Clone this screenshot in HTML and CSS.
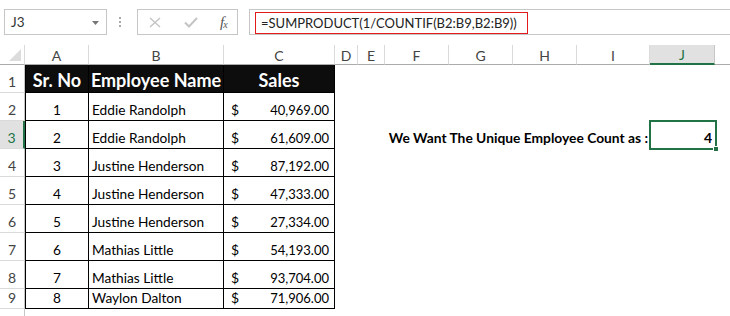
FILE: index.html
```html
<!DOCTYPE html>
<html>
<head>
<meta charset="utf-8">
<link rel="stylesheet" href="styles.css">
</head>
<body>
<div class="toolbar">
  <div class="namebox"><span class="ref">J3</span><svg class="caret" width="7" height="4" viewBox="0 0 7 4"><polygon points="0,0 7,0 3.5,4" fill="#777"/></svg></div>
  <div class="grip"><i></i><i></i><i></i></div>
  <div class="fbtns">
    <svg class="ico-x" width="12" height="11" viewBox="0 0 12 11"><path d="M1 1 L11 10 M11 1 L1 10" stroke="#c4c4c4" stroke-width="1.4" fill="none"/></svg>
    <svg class="ico-ok" width="14" height="11" viewBox="0 0 14 11"><path d="M1 5.5 L5 9.5 L13 1" stroke="#c4c4c4" stroke-width="2" fill="none"/></svg>
    <span class="fx">f<sub>x</sub></span>
  </div>
  <div class="fbar"><div class="formula">=SUMPRODUCT(1/COUNTIF(B2:B9,B2:B9))</div></div>
</div>
<div class="sheet">
  <div class="row colhead">
    <div class="ch corner"><svg width="24" height="19" viewBox="0 0 24 19"><polygon points="21,4 21,16 9,16" fill="#dcdcdc"/></svg></div>
    <div class="ch">A</div><div class="ch">B</div><div class="ch">C</div><div class="ch">D</div><div class="ch">E</div>
    <div class="ch">F</div><div class="ch">G</div><div class="ch">H</div><div class="ch">I</div><div class="ch active">J</div><div class="ch last"></div>
  </div>
  <div class="row">
    <div class="rh">1</div>
    <div class="c th a">Sr. No</div><div class="c th">Employee Name</div><div class="c th">Sales</div>
  </div>
  <div class="row">
    <div class="rh">2</div>
    <div class="c a num">1</div><div class="c name">Eddie Randolph</div><div class="c amt"><span>$</span><span>40,969.00</span></div>
  </div>
  <div class="row">
    <div class="rh active">3</div>
    <div class="c a num">2</div><div class="c name">Eddie Randolph</div><div class="c amt"><span>$</span><span>61,609.00</span></div>
    <div class="label">We Want The Unique Employee Count as :</div>
    <div class="result">4<div class="selection"><div class="handle"></div></div></div>
  </div>
  <div class="row">
    <div class="rh">4</div>
    <div class="c a num">3</div><div class="c name">Justine Henderson</div><div class="c amt"><span>$</span><span>87,192.00</span></div>
  </div>
  <div class="row">
    <div class="rh">5</div>
    <div class="c a num">4</div><div class="c name">Justine Henderson</div><div class="c amt"><span>$</span><span>47,333.00</span></div>
  </div>
  <div class="row">
    <div class="rh">6</div>
    <div class="c a num">5</div><div class="c name">Justine Henderson</div><div class="c amt"><span>$</span><span>27,334.00</span></div>
  </div>
  <div class="row">
    <div class="rh">7</div>
    <div class="c a num">6</div><div class="c name">Mathias Little</div><div class="c amt"><span>$</span><span>54,193.00</span></div>
  </div>
  <div class="row">
    <div class="rh">8</div>
    <div class="c a num">7</div><div class="c name">Mathias Little</div><div class="c amt"><span>$</span><span>93,704.00</span></div>
  </div>
  <div class="row short">
    <div class="rh">9</div>
    <div class="c a num">8</div><div class="c name">Waylon Dalton</div><div class="c amt"><span>$</span><span>71,906.00</span></div>
  </div>
  <div class="row tail">
    <div class="rh"></div>
  </div>
</div>
</body>
</html>
```
FILE: styles.css
```css
* { box-sizing: border-box; }
html, body { margin: 0; padding: 0; }
body {
  width: 730px;
  height: 316px;
  overflow: hidden;
  background: #fff;
  font-family: Lato, "Liberation Sans", sans-serif;
  color: #000;
}

/* ---------- toolbar ---------- */
.toolbar {
  height: 45px;
  display: flex;
  align-items: flex-start;
  padding-top: 9px;
}
.namebox {
  margin-left: 4px;
  width: 103px;
  height: 26px;
  border: 1px solid #c6c6c6;
  display: flex;
  align-items: center;
  justify-content: space-between;
  padding: 0 7px 0 6px;
}
.ref { font-size: 13.5px; color: #333; }
.caret { margin-top: 1px; }
.grip {
  margin-left: 12px;
  width: 2px;
  height: 26px;
  display: flex;
  flex-direction: column;
  justify-content: center;
  gap: 2px;
}
.grip i { display: block; width: 2px; height: 2px; background: #a8a8a8; }
.fbtns {
  margin-left: 16px;
  width: 101px;
  height: 26px;
  border: 1px solid #c6c6c6;
  display: flex;
  align-items: center;
  padding-left: 11px;
}
.ico-x { margin-right: 23px; }
.ico-ok { margin-right: 22px; }
.fx {
  font-family: "Liberation Serif", serif;
  font-style: italic;
  font-size: 15px;
  color: #555;
  letter-spacing: -1px;
}
.fx sub { font-size: 10px; vertical-align: -1px; }
.fbar {
  margin-left: 11px;
  flex: 1;
  margin-right: -3px;
  height: 26px;
  border: 1px solid #c6c6c6;
  padding: 2px 0 0 5px;
}
.formula {
  width: 273px;
  height: 22px;
  border: 1px solid #e11b1b;
  font-size: 13px;
  color: #222;
  padding-left: 5px;
  line-height: 20px;
  white-space: nowrap;
}

/* ---------- sheet ---------- */
.row {
  display: grid;
  grid-template-columns: 25px 64px 135px 111px 23px 27px 64px 64px 64px 73px 65px 1fr;
  height: 28px;
}
.row.short { height: 20px; }
.row.tail { height: 8px; }
.colhead { height: 20px; }
.ch {
  height: 20px;
  border-right: 1px solid #dadada;
  border-bottom: 1px solid #ababab;
  display: flex;
  align-items: center;
  justify-content: center;
  font-size: 14px;
  color: #444;
  padding-top: 1px;
}
.ch.corner { border-right-color: #dadada; align-items: flex-start; justify-content: flex-start; padding: 0; }
.ch.corner svg { display: block; }
.ch.last { border-right: none; }
.ch.active {
  background: #e1e1e1;
  border-bottom: 2px solid #217346;
  border-right-color: #c6c6c6;
  color: #217346;
}

.rh {
  grid-column: 1;
  border-right: 1px solid #c6c6c6;
  border-bottom: 1px solid #dadada;
  display: flex;
  align-items: flex-end;
  justify-content: center;
  font-size: 14px;
  color: #444;
  padding-bottom: 3px;
  line-height: 1;
}
.rh.active {
  background: #e1e1e1;
  border-right: 2px solid #217346;
  color: #217346;
}

.c {
  border-right: 1px solid #000;
  border-bottom: 1px solid #000;
  display: flex;
  align-items: flex-end;
  font-size: 13.7px;
  line-height: 1;
  padding-bottom: 3px;
  white-space: nowrap;
}
.c.a { border-left: 1px solid #000; justify-content: center; }
.c.th {
  background: #0d0d0d;
  color: #fff;
  font-weight: bold;
  font-size: 18px;
  justify-content: center;
  padding-bottom: 3px;
}
.c.name { padding-left: 3px; }
.c.amt { justify-content: space-between; padding-left: 7px; padding-right: 5px; font-size: 13px; }
.c.amt span:first-child { font-size: 14px; }

.label {
  grid-column: 5 / 11;
  display: flex;
  align-items: flex-end;
  justify-content: flex-end;
  padding: 0 2px 4px 0;
  font-size: 13.8px;
  font-weight: bold;
  line-height: 1;
  white-space: nowrap;
}
.result {
  grid-column: 11;
  position: relative;
  display: flex;
  align-items: flex-end;
  justify-content: flex-end;
  padding: 0 3px 4px 0;
  font-size: 14px;
  font-weight: bold;
  line-height: 1;
}
.selection {
  position: absolute;
  left: -1px;
  right: -2px;
  top: -1px;
  bottom: -1px;
  border: 2px solid #217346;
}
.handle {
  position: absolute;
  right: -4px;
  bottom: -4px;
  width: 6px;
  height: 6px;
  background: #217346;
  border: 1px solid #fff;
}
```
